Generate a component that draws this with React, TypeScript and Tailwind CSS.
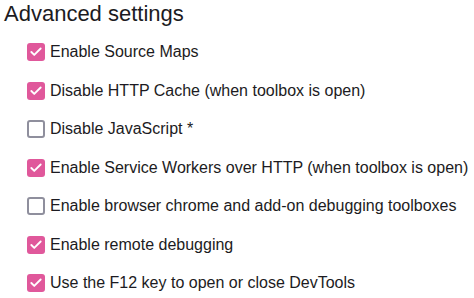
import { Check } from 'lucide-react'

const items = [
  { label: 'Enable Source Maps', checked: true },
  { label: 'Disable HTTP Cache (when toolbox is open)', checked: true },
  { label: 'Disable JavaScript *', checked: false },
  { label: 'Enable Service Workers over HTTP (when toolbox is open)', checked: true },
  { label: 'Enable browser chrome and add-on debugging toolboxes', checked: false },
  { label: 'Enable remote debugging', checked: true },
  { label: 'Use the F12 key to open or close DevTools', checked: true },
]

export default function App() {
  return (
    <div className="w-[474px] h-[298px] overflow-hidden bg-white text-[#1c1b22] font-['Liberation_Sans',Arial,sans-serif]">
      <h2 className="pl-[4px] pt-[1px] text-[22px] leading-[26px] whitespace-nowrap">Advanced settings</h2>
      <ul className="pl-[27px] pt-[16px] flex flex-col gap-[20.5px]">
        {items.map((it) => (
          <li key={it.label} className="flex items-center gap-[5px] h-[18px] whitespace-nowrap">
            {it.checked ? (
              <span className="w-[18px] h-[18px] rounded-[3px] bg-[#e0589b] flex items-center justify-center shrink-0">
                <Check size={14} strokeWidth={3.2} color="#ffffff" />
              </span>
            ) : (
              <span className="w-[18px] h-[18px] rounded-[3px] border-2 border-[#8f8f9d] bg-white shrink-0" />
            )}
            <span className="text-[16px] leading-[18px]">{it.label}</span>
          </li>
        ))}
      </ul>
    </div>
  )
}
